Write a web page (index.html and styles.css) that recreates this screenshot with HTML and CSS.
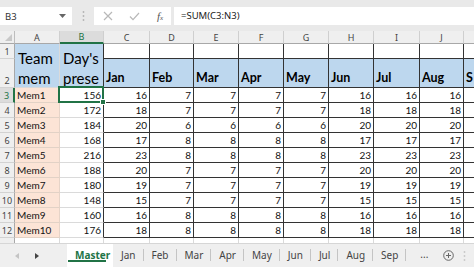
FILE: index.html
```html
<!DOCTYPE html>
<html lang="en">
<head>
  <meta charset="UTF-8" />
  <title>Team attendance</title>
  <link rel="stylesheet" href="styles.css">
</head>
<body>
  <div class="app">
    <div class="formula-bar">
      <div class="name-box">
        <span>B3</span>
        <svg width="7" height="4" viewBox="0 0 7 4"><path d="M0 0h7L3.5 4z" fill="#666"/></svg>
      </div>
      <div class="grip">
        <svg width="3" height="12" viewBox="0 0 3 12"><circle cx="1.5" cy="2" r="0.9"/><circle cx="1.5" cy="6" r="0.9"/><circle cx="1.5" cy="10" r="0.9"/></svg>
      </div>
      <div class="fx-box">
        <span class="fx-btn"><svg width="10" height="10" viewBox="0 0 10 10"><path d="M1 1l8 8M9 1l-8 8" stroke="#b8b8b8" stroke-width="1.2"/></svg></span>
        <span class="fx-btn"><svg width="11" height="9" viewBox="0 0 11 9"><path d="M1 4.5l3 3.2L10 1" stroke="#b8b8b8" stroke-width="1.2" fill="none"/></svg></span>
        <span class="fx-btn fx"><i>f</i><span class="x">x</span></span>
      </div>
      <div class="formula-input">=SUM(C3:N3)</div>
    </div>

    <div class="sheet-wrap">
      <div class="sheet">
        <!-- column headers -->
        <div class="corner"></div>
        <div class="ch">A</div><div class="ch on">B</div><div class="ch">C</div><div class="ch">D</div>
        <div class="ch">E</div><div class="ch">F</div><div class="ch">G</div><div class="ch">H</div>
        <div class="ch">I</div><div class="ch">J</div><div class="ch"></div>

        <!-- rows 1-2: titles -->
        <div class="rh">1</div>
        <div class="title">Team mem</div>
        <div class="title dr">Day's prese</div>
        <div class="d"></div><div class="d"></div><div class="d"></div><div class="d"></div><div class="d"></div>
        <div class="d"></div><div class="d"></div><div class="d"></div><div class="d"></div>
        <div class="rh">2</div>
        <div class="d mo">Jan</div><div class="d mo">Feb</div><div class="d mo">Mar</div><div class="d mo">Apr</div>
        <div class="d mo">May</div><div class="d mo">Jun</div><div class="d mo">Jul</div><div class="d mo">Aug</div>
        <div class="d mo">S</div>

        <!-- data -->
        <div class="rh on">3</div><div class="nm">Mem1</div><div class="b pick">156</div>
        <div class="d">16</div><div class="d">7</div><div class="d">7</div><div class="d">7</div><div class="d">7</div><div class="d">16</div><div class="d">16</div><div class="d">16</div><div class="d"></div>
        <div class="rh">4</div><div class="nm">Mem2</div><div class="b">172</div>
        <div class="d">18</div><div class="d">7</div><div class="d">7</div><div class="d">7</div><div class="d">7</div><div class="d">18</div><div class="d">18</div><div class="d">18</div><div class="d"></div>
        <div class="rh">5</div><div class="nm">Mem3</div><div class="b">184</div>
        <div class="d">20</div><div class="d">6</div><div class="d">6</div><div class="d">6</div><div class="d">6</div><div class="d">20</div><div class="d">20</div><div class="d">20</div><div class="d"></div>
        <div class="rh">6</div><div class="nm">Mem4</div><div class="b">168</div>
        <div class="d">17</div><div class="d">8</div><div class="d">8</div><div class="d">8</div><div class="d">8</div><div class="d">17</div><div class="d">17</div><div class="d">17</div><div class="d"></div>
        <div class="rh">7</div><div class="nm">Mem5</div><div class="b">216</div>
        <div class="d">23</div><div class="d">8</div><div class="d">8</div><div class="d">8</div><div class="d">8</div><div class="d">23</div><div class="d">23</div><div class="d">23</div><div class="d"></div>
        <div class="rh">8</div><div class="nm">Mem6</div><div class="b">188</div>
        <div class="d">20</div><div class="d">7</div><div class="d">7</div><div class="d">7</div><div class="d">7</div><div class="d">20</div><div class="d">20</div><div class="d">20</div><div class="d"></div>
        <div class="rh">9</div><div class="nm">Mem7</div><div class="b">180</div>
        <div class="d">19</div><div class="d">7</div><div class="d">7</div><div class="d">7</div><div class="d">7</div><div class="d">19</div><div class="d">19</div><div class="d">19</div><div class="d"></div>
        <div class="rh">10</div><div class="nm">Mem8</div><div class="b">148</div>
        <div class="d">15</div><div class="d">7</div><div class="d">7</div><div class="d">7</div><div class="d">7</div><div class="d">15</div><div class="d">15</div><div class="d">15</div><div class="d"></div>
        <div class="rh">11</div><div class="nm">Mem9</div><div class="b">160</div>
        <div class="d">16</div><div class="d">8</div><div class="d">8</div><div class="d">8</div><div class="d">8</div><div class="d">16</div><div class="d">16</div><div class="d">16</div><div class="d"></div>
        <div class="rh">12</div><div class="nm">Mem10</div><div class="b">176</div>
        <div class="d">18</div><div class="d">8</div><div class="d">8</div><div class="d">8</div><div class="d">8</div><div class="d">18</div><div class="d">18</div><div class="d">18</div><div class="d"></div>

        <div class="rh"></div><div class="e"></div><div class="e"></div><div class="e"></div><div class="e"></div><div class="e"></div>
        <div class="e"></div><div class="e"></div><div class="e"></div><div class="e"></div><div class="e"></div><div class="e"></div>
      </div>
    </div>

    <div class="tabs">
      <div class="nav">
        <svg width="4" height="6" viewBox="0 0 4 6"><path d="M4 0v6L0 3z" fill="#c4c4c4"/></svg>
        <svg width="4" height="6" viewBox="0 0 4 6"><path d="M0 0v6l4-3z" fill="#444"/></svg>
      </div>
      <div class="tab active">Master</div>
      <div class="tab">Jan</div>
      <div class="tab">Feb</div>
      <div class="tab">Mar</div>
      <div class="tab">Apr</div>
      <div class="tab">May</div>
      <div class="tab">Jun</div>
      <div class="tab">Jul</div>
      <div class="tab">Aug</div>
      <div class="tab">Sep</div>
      <div class="more">...</div>
      <div class="add">
        <svg width="11" height="11" viewBox="0 0 11 11"><circle cx="5.5" cy="5.5" r="4.8" fill="none" stroke="#666" stroke-width="1"/><path d="M5.5 3v5M3 5.5h5" stroke="#666" stroke-width="1"/></svg>
      </div>
      <div class="grip tab-grip">
        <svg width="3" height="12" viewBox="0 0 3 12"><circle cx="1.5" cy="2" r="0.9"/><circle cx="1.5" cy="6" r="0.9"/><circle cx="1.5" cy="10" r="0.9"/></svg>
      </div>
    </div>
  </div>
</body>
</html>
```

FILE: styles.css
```css
html, body {
  margin: 0; padding: 0; width: 474px; height: 267px; overflow: hidden; background: #fff;
  font-family: "Noto Sans", "Open Sans", sans-serif;
}
.app {
  display: flex;
  flex-direction: column;
  height: 267px;
}

/* formula bar */
.formula-bar {
  height: 31px;
  flex-shrink: 0;
  box-sizing: border-box;
  padding-top: 7px;
  background: #e9e9e9;
  display: flex;
  align-items: flex-start;
}
.name-box {
  width: 72px;
  height: 18px;
  box-sizing: border-box;
  background: #fff;
  display: flex;
  align-items: center;
  justify-content: space-between;
  padding: 0 6px 0 5px;
  font-size: 9.5px;
  color: #333;
}
.grip {
  width: 22px;
  height: 18px;
  display: flex;
  align-items: center;
  justify-content: center;
  fill: #b4b4b4;
}
.fx-box {
  width: 77px;
  height: 18px;
  background: #fff;
  display: flex;
  align-items: center;
  gap: 12px;
  padding-left: 7px;
  box-sizing: border-box;
}
.fx-btn {
  width: 14px;
  display: flex;
  justify-content: center;
  align-items: center;
}
.fx {
  font-family: "Liberation Serif", serif;
  font-size: 11px;
  color: #555;
}
.fx .x {
  font-size: 7px;
  font-style: italic;
  margin-top: 4px;
}
.formula-input {
  flex: 1;
  height: 18px;
  margin-left: 3px;
  background: #fff;
  font-size: 9.5px;
  color: #222;
  line-height: 18px;
  padding-left: 7px;
}

/* grid */
.sheet-wrap {
  height: 212px;
  overflow: hidden;
  flex-shrink: 0;
}
.sheet {
  display: grid;
  grid-template-columns: 15px 45px 44px 46px 44px 45px 45px 45px 45px 46px 44px 46px;
  grid-template-rows: 13px 15px 29px repeat(11, 15px);
  width: 510px;
}
.sheet > div {
  box-sizing: border-box;
  border-right: 1px solid #dadada;
  border-bottom: 1px solid #dadada;
  font-family: Lato, "Liberation Sans", sans-serif;
  font-size: 10px;
  color: #111;
  display: flex;
  align-items: flex-end;
  justify-content: flex-end;
  padding: 0 2px 2px;
  line-height: 1;
  white-space: nowrap;
  overflow: hidden;
}
.sheet > .corner {
  background: #efefef;
  border-right-color: #bdbdbd;
  border-bottom-color: #a8a8a8;
  position: relative;
}
.corner::after {
  content: "";
  position: absolute;
  right: 2px;
  bottom: 2px;
  border-left: 7px solid transparent;
  border-bottom: 7px solid #c8c8c8;
}
.sheet > .ch {
  background: #efefef;
  border-right-color: #cfcfcf;
  border-bottom-color: #a8a8a8;
  justify-content: center;
  align-items: center;
  padding: 0;
  font-family: "Noto Sans", sans-serif;
  font-size: 9px;
  color: #444;
}
.sheet > .ch.on {
  background: #dcdcdc;
  color: #217346;
  border-bottom: 2px solid #217346;
}
.sheet > .rh {
  background: #efefef;
  border-right-color: #a8a8a8;
  border-bottom-color: #d2d2d2;
  justify-content: center;
  padding: 0 0 2px;
  font-family: "Noto Sans", sans-serif;
  font-size: 9px;
  color: #444;
}
.sheet > .rh.on {
  background: #dcdcdc;
  color: #217346;
  border-right: 2px solid #217346;
}
.sheet > .title {
  grid-row: span 2;
  background: #bdd7ee;
  font-size: 15px;
  line-height: 20px;
  white-space: normal;
  justify-content: flex-start;
  align-items: flex-start;
  padding: 4px 2px 0 3px;
  color: #000;
}
.sheet > .dr {
  border-right-color: #333;
}
.sheet > .d {
  border-right-color: #333;
  border-bottom-color: #333;
}
.sheet > .mo {
  background: #bdd7ee;
  font-weight: bold;
  font-size: 12.5px;
  justify-content: flex-start;
  padding-bottom: 3px;
  color: #000;
}
.sheet > .nm {
  background: #fce4d6;
  border-right-color: #e6d4c8;
  border-bottom-color: #e2d2c6;
  justify-content: flex-start;
}
.sheet > .b {
  border-right-color: #333;
}
.sheet > .pick {
  position: relative;
  overflow: visible;
  z-index: 2;
}
.pick::after {
  content: "";
  position: absolute;
  left: -2px;
  top: -2px;
  right: -1px;
  bottom: -1px;
  border: 2px solid #217346;
}
.pick::before {
  content: "";
  position: absolute;
  right: -3px;
  bottom: -3px;
  width: 4px;
  height: 4px;
  background: #217346;
  border: 1px solid #fff;
  z-index: 3;
}

/* sheet tabs */
.tabs {
  flex: 1;
  display: flex;
  align-items: stretch;
  background: #efefef;
  border-top: 1px solid #d6d6d6;
  font-size: 10px;
  color: #444;
}
.tabs > div {
  flex-shrink: 0;
}
.nav {
  width: 67px;
  display: flex;
  align-items: center;
  gap: 16px;
  padding-left: 15px;
  box-sizing: border-box;
}
.tab {
  position: relative;
  display: flex;
  align-items: center;
  padding: 0 8px 2px;
}
.tab::after {
  content: "";
  position: absolute;
  right: 0;
  top: 5px;
  bottom: 6px;
  width: 1px;
  background: #c4c4c4;
}
.tab.active {
  background: #fff;
  color: #217346;
  font-weight: bold;
  padding: 0 8px 2px;
  width: 46px;
  box-sizing: border-box;
}
.tab.active::after {
  top: auto;
  right: 7px;
  left: 1px;
  bottom: 5px;
  width: auto;
  height: 2px;
  background: #217346;
}
.more {
  width: 36px;
  display: flex;
  align-items: center;
  justify-content: center;
  padding-bottom: 3px;
}
.add {
  width: 12px;
  display: flex;
  align-items: center;
  justify-content: center;
}
.tabs > .tab-grip {
  flex: 1;
  height: auto;
  fill: #c8c8c8;
}
```
